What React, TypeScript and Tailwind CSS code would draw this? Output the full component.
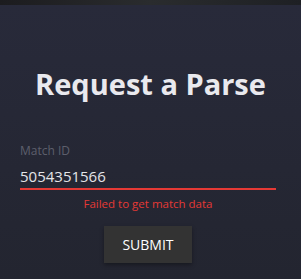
import React from 'react';

export default function App() {
    return (
        <div className="w-[301px] h-[279px] overflow-hidden bg-[#262837] flex flex-col" style={{ fontFamily: '"Open Sans", "Noto Sans", sans-serif' }}>
            <div className="h-[5px] w-full bg-gradient-to-r from-[#1c1c1f] via-[#2a2c2e] to-[#1e2024]" />
            <div className="flex-1 bg-gradient-to-b from-[#282a3a] to-[#232530] flex flex-col">
                <h1 className="mt-[59px] text-center text-[29px] leading-[40px] font-bold text-[#e9e9ee]">Request a Parse</h1>
                <form className="mt-[39px] ml-5 w-[256px] flex flex-col" onSubmit={(e) => e.preventDefault()}>
                    <label className="text-[12px] leading-[16px] text-[#5d5f6c]">Match ID</label>
                    <input
                        defaultValue="5054351566"
                        className="mt-[7px] w-[256px] bg-transparent text-[15px] leading-[20px] text-[#e4e4e8] outline-none border-b-2 border-[#e53935] pb-[2px]"
                    />
                    <p className="mt-[6px] text-center text-[11.5px] leading-[16px] text-[#e53935]">Failed to get match data</p>
                    <div className="flex justify-center mt-[14px]">
                        <button className="w-[88px] h-[37px] bg-[#333333] text-white text-[14px] shadow-[0_2px_4px_rgba(0,0,0,0.35)]">SUBMIT</button>
                    </div>
                </form>
            </div>
        </div>
    );
}
